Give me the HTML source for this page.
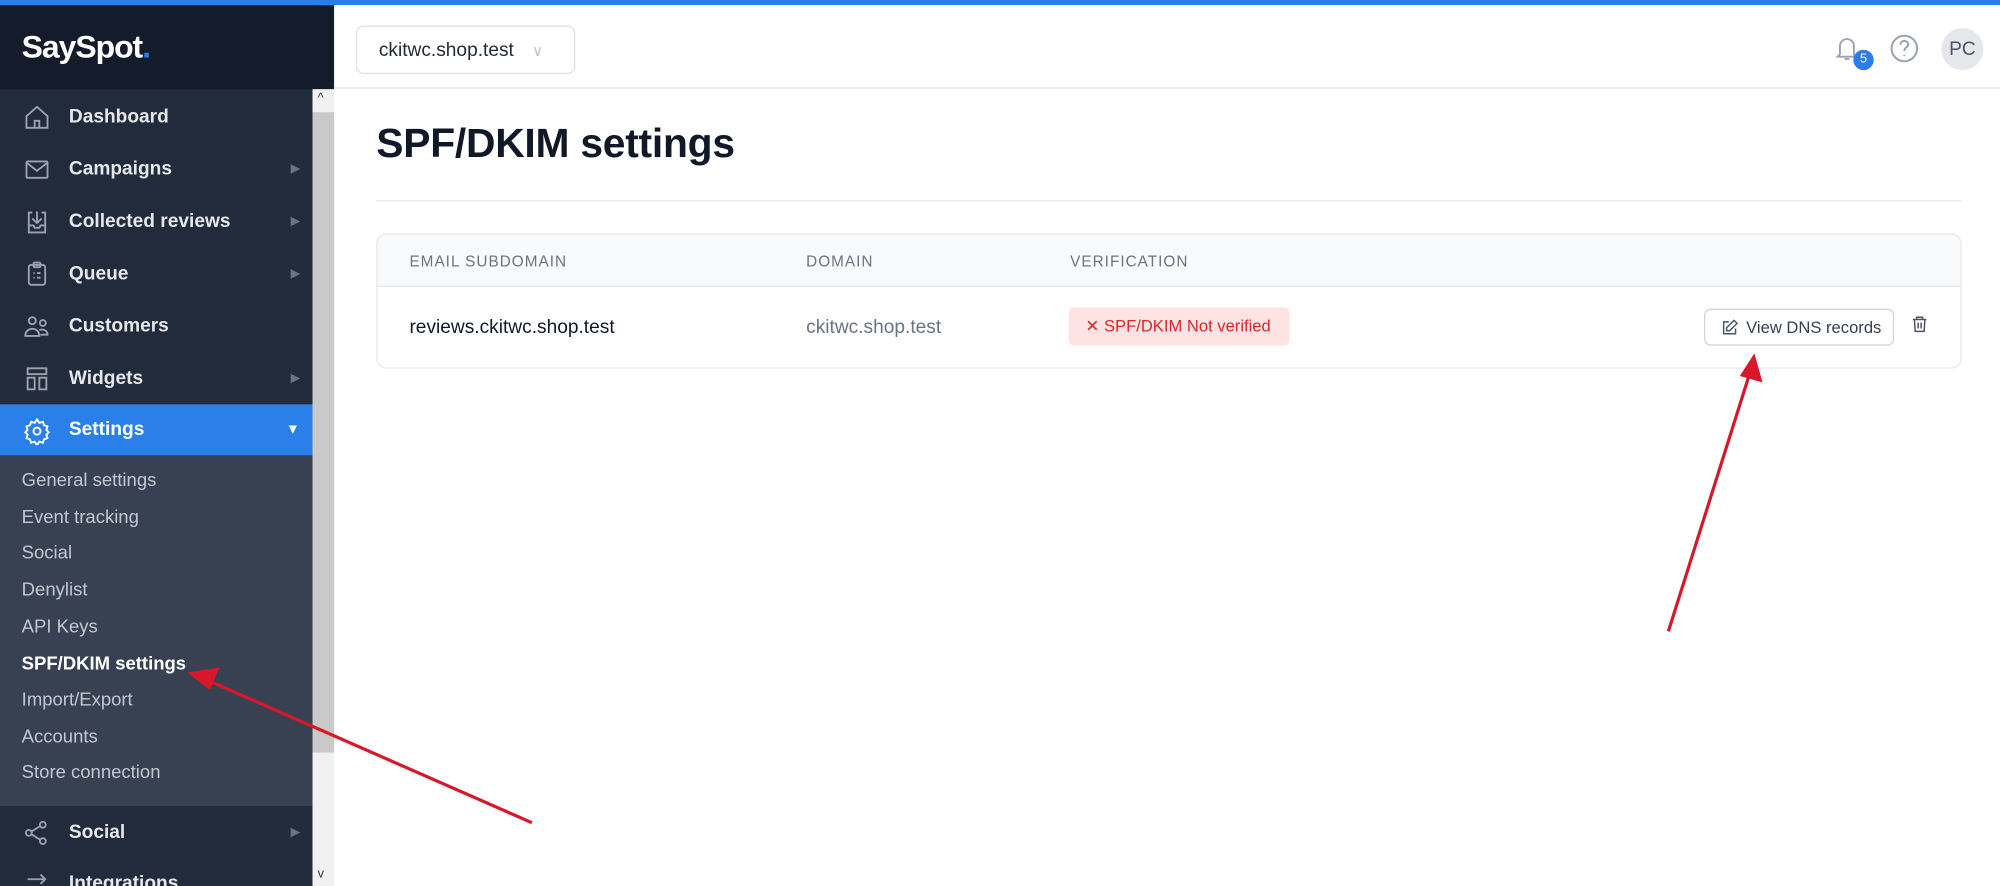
<!DOCTYPE html>
<html><head><meta charset="utf-8"><style>
*{box-sizing:border-box;margin:0;padding:0}
html,body{width:2000px;height:886px;overflow:hidden;background:#fff;font-family:"Liberation Sans",Arial,sans-serif}
#w{position:absolute;left:0;top:0;width:1568px;height:695px;transform:scale(1.27551);transform-origin:0 0;overflow:hidden}
.abs{position:absolute}
.top{left:0;top:0;width:1568px;height:4px;background:#2b7de9}
.sb{left:0;top:4px;width:245px;height:691px;background:#222b3b}
.hd{left:0;top:4px;width:262px;height:66px;background:#141c2b}
.logo{left:17px;top:23px;color:#fff;font-weight:bold;font-size:25px;letter-spacing:-0.8px}
.logo span{color:#2b7de9}
.it{position:absolute;left:0;width:245px;height:41px;color:#e5e7eb;font-weight:bold;font-size:15px;line-height:41px;padding-left:54px}
.it svg{position:absolute;left:18px;top:10px}
.it .ar{position:absolute;right:10px;top:0;font-size:9px;color:#6b7280}
.sub{left:0;top:357px;width:245px;height:275px;background:#374151}
.si{position:absolute;left:17px;color:#c3c8d0;font-size:14.5px}
.scr{left:245px;top:70px;width:17px;height:625px;background:#f1f1f1}
.th{left:245px;top:88px;width:17px;height:502px;background:#c9c9c9}
.mh{left:262px;top:4px;width:1306px;height:66px;background:#fff;border-bottom:2px solid #eceef1}
.sel{left:279px;top:20px;width:172px;height:38px;border:1px solid #dcdfe4;border-radius:6px;font-size:15px;color:#1f2937;padding:10px 0 0 17px}
.title{left:295px;top:94px;font-size:32px;font-weight:bold;color:#111827;letter-spacing:-0.2px}
.hr{left:295px;top:157px;width:1243px;height:1px;background:#e5e7eb}
.card{left:295px;top:183px;width:1243px;height:106px;border:1px solid #e5e7eb;border-radius:8px;overflow:hidden}
.ch{position:absolute;left:0;top:0;width:100%;height:41px;background:#f9fafb;border-bottom:1px solid #e5e7eb}
.hx{position:absolute;top:14px;font-size:12px;color:#6b7280;letter-spacing:0.8px}
.badge{left:838px;top:241px;width:173px;height:30px;background:#fde3e3;border-radius:4px;color:#dc2626;font-size:13px;line-height:30px;padding-left:13px}
.btn{left:1336px;top:242px;width:149px;height:29px;border:1px solid #d1d5db;border-radius:5px;font-size:13px;color:#374151;line-height:27px;padding-left:32px}
</style></head><body><div id="w">
<div class="abs top"></div>
<div class="abs sb"></div>
<div class="abs hd"></div>
<div class="abs logo">SaySpot<span>.</span></div>
<div class="abs scr"></div><div class="abs th"></div>
<div class="abs" style="left:249px;top:72px;font-size:10px;color:#333">&#94;</div>
<div class="abs" style="left:249px;top:680px;font-size:10px;color:#333">v</div>

<div class="it" style="top:71px"><svg width="22" height="22" viewBox="0 0 24 24" fill="none" stroke="#9ca3af" stroke-width="1.6"><path d="M3 11l9-8 9 8v10H3z M10 21v-6h4v6"/></svg>Dashboard</div>
<div class="it" style="top:112px"><svg width="22" height="22" viewBox="0 0 24 24" fill="none" stroke="#9ca3af" stroke-width="1.6"><rect x="3" y="5" width="18" height="14" rx="1"/><path d="M3 6l9 7 9-7"/></svg>Campaigns<span class="ar">&#9654;</span></div>
<div class="it" style="top:153px"><svg width="22" height="22" viewBox="0 0 24 24" fill="none" stroke="#9ca3af" stroke-width="1.6"><path d="M8 4H5v17h14V4h-3 M12 3v9 M8 9l4 4 4-4 M5 15h4l1 2h4l1-2h4"/></svg>Collected reviews<span class="ar">&#9654;</span></div>
<div class="it" style="top:194px"><svg width="22" height="22" viewBox="0 0 24 24" fill="none" stroke="#9ca3af" stroke-width="1.6"><rect x="5" y="4" width="14" height="17" rx="2"/><rect x="9" y="2" width="6" height="4" rx="1"/><path d="M9 11h1M12 11h3M9 15h1M12 15h3"/></svg>Queue<span class="ar">&#9654;</span></div>
<div class="it" style="top:235px"><svg width="22" height="22" viewBox="0 0 24 24" fill="none" stroke="#9ca3af" stroke-width="1.6"><circle cx="8" cy="7" r="3"/><circle cx="17" cy="9" r="2.5"/><path d="M2 20c0-4 3-6 6-6s6 2 6 6z M14 15c3-1 7 0 7 4h-6"/></svg>Customers</div>
<div class="it" style="top:276px"><svg width="22" height="22" viewBox="0 0 24 24" fill="none" stroke="#9ca3af" stroke-width="1.6"><rect x="4" y="3" width="16" height="5"/><rect x="4" y="11" width="6" height="10"/><rect x="14" y="11" width="6" height="10"/></svg>Widgets<span class="ar">&#9654;</span></div>
<div class="it" style="top:317px;height:40px;background:#2b7fe8;color:#fff;line-height:40px"><svg width="22" height="22" viewBox="0 0 24 24" fill="none" stroke="#fff" stroke-width="1.6"><circle cx="12" cy="12" r="3"/><path d="M12 2l2 3 3-1 1 3 3 1-1 3 2 2-2 2 1 3-3 1-1 3-3-1-2 3-2-3-3 1-1-3-3-1 1-3-2-2 2-2-1-3 3-1 1-3 3 1z"/></svg>Settings<span class="ar" style="color:#fff;font-size:11px">&#9660;</span></div>
<div class="abs sub"></div>
<div class="si" style="top:369px">General settings</div>
<div class="si" style="top:398px">Event tracking</div>
<div class="si" style="top:426px">Social</div>
<div class="si" style="top:455px">Denylist</div>
<div class="si" style="top:484px">API Keys</div>
<div class="si" style="top:513px;color:#fff;font-weight:bold">SPF/DKIM settings</div>
<div class="si" style="top:541px">Import/Export</div>
<div class="si" style="top:570px">Accounts</div>
<div class="si" style="top:598px">Store connection</div>
<div class="it" style="top:632px"><svg width="22" height="22" viewBox="0 0 24 24" fill="none" stroke="#9ca3af" stroke-width="1.6"><circle cx="5" cy="12" r="2.5"/><circle cx="17" cy="5" r="2.5"/><circle cx="17" cy="19" r="2.5"/><path d="M7 11l8-5M7 13l8 5"/></svg>Social<span class="ar">&#9654;</span></div>
<div class="it" style="top:672px"><svg width="22" height="22" viewBox="0 0 24 24" fill="none" stroke="#9ca3af" stroke-width="1.6"><path d="M4 8h15M15 4l4 4-4 4M20 16H5"/></svg>Integrations</div>

<div class="abs mh"></div>
<div class="abs sel">ckitwc.shop.test <span style="color:#c0c4ca;margin-left:10px;font-size:12px">&#8744;</span></div>
<svg class="abs" style="left:1437px;top:26px" width="22" height="24" viewBox="0 0 24 24" fill="none" stroke="#9ca3af" stroke-width="1.6"><path d="M6 17V10a6 6 0 0112 0v7l2 2H4z M10 21h4"/></svg>
<div class="abs" style="left:1453px;top:39px;width:16px;height:16px;border-radius:50%;background:#2b7de9;color:#fff;font-size:10px;text-align:center;line-height:16px">5</div>
<svg class="abs" style="left:1481px;top:26px" width="24" height="24" viewBox="0 0 24 24" fill="none" stroke="#9ca3af" stroke-width="1.6"><circle cx="12" cy="12" r="10"/><path d="M9 9a3 3 0 116 0c0 2-3 2-3 5M12 17v1"/></svg>
<div class="abs" style="left:1522px;top:22px;width:33px;height:33px;border-radius:50%;background:#e5e7eb;color:#4b5563;font-size:15px;text-align:center;line-height:33px">PC</div>

<div class="abs title">SPF/DKIM settings</div>
<div class="abs hr"></div>
<div class="abs card"><div class="ch"></div>
<div class="hx" style="left:25px">EMAIL SUBDOMAIN</div>
<div class="hx" style="left:336px">DOMAIN</div>
<div class="hx" style="left:543px">VERIFICATION</div>
<div class="abs" style="left:25px;top:64px;font-size:15px;color:#111827">reviews.ckitwc.shop.test</div>
<div class="abs" style="left:336px;top:64px;font-size:15px;color:#6b7280">ckitwc.shop.test</div>
</div>
<div class="abs badge">&#10005; SPF/DKIM Not verified</div>
<div class="abs btn"><svg class="abs" style="left:12px;top:7px" width="14" height="14" viewBox="0 0 24 24" fill="none" stroke="#4b5563" stroke-width="2"><path d="M11 4H4v16h16v-7 M18 2l4 4-10 10H8v-4z"/></svg>View DNS records</div>
<svg class="abs" style="left:1498px;top:246px" width="14" height="16" viewBox="0 0 24 24" fill="none" stroke="#4b5563" stroke-width="2"><path d="M3 6h18M8 6V3h8v3M5 6l1 16h12l1-16M10 10v8M14 10v8"/></svg>

<svg class="abs" style="left:0;top:0" width="1568" height="695"><g stroke="#d8182a" stroke-width="2.5" fill="#d8182a"><line x1="417" y1="645" x2="162" y2="533"/><polygon points="150,528 170,525 164,539" /><line x1="1308" y1="495" x2="1372" y2="292"/><polygon points="1375,280 1380,298 1366,294"/></g></svg>
</div></body></html>
